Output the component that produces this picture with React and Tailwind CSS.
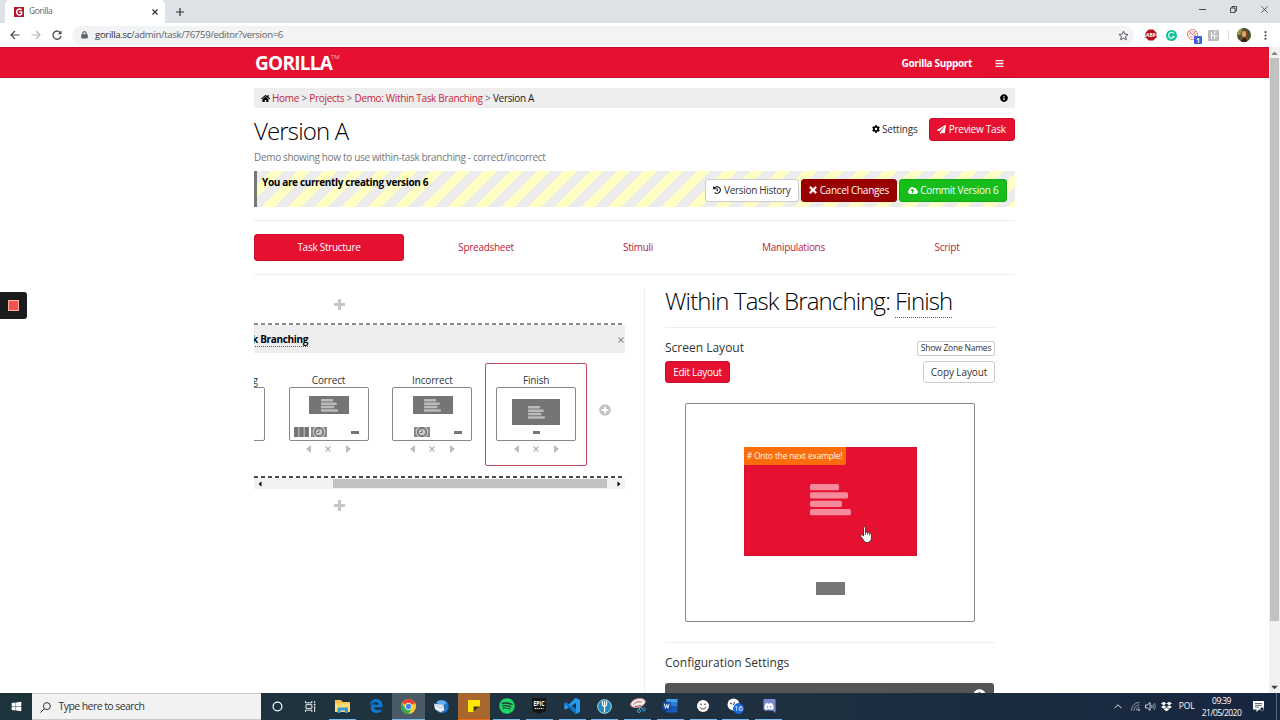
import React from "react";
import {
  FaHome, FaInfoCircle, FaCog, FaPaperPlane, FaHistory, FaTimes, FaCloudUploadAlt,
  FaBars, FaLock, FaSpotify, FaDiscord, FaDropbox, FaWindows,
  FaCaretLeft, FaCaretRight, FaCaretUp, FaCaretDown,
} from "react-icons/fa";

const BARS = [29, 38, 32, 41];

function TextLines({ className, fill }) {
  return (
    <svg viewBox="0 0 41 33" className={className} fill={fill} preserveAspectRatio="none">
      {BARS.map((w, i) => (
        <rect key={i} x="0" y={i * 8.6} width={w} height="6.4" rx="1.6" />
      ))}
    </svg>
  );
}

function Plus({ className }) {
  return (
    <svg viewBox="0 0 11 11" className={className + " h-[11px] w-[11px]"} fill="#c6c6c6">
      <rect x="4" y="0" width="3" height="11" rx=".6" />
      <rect x="0" y="4" width="11" height="3" rx=".6" />
    </svg>
  );
}

function Cross({ color = "#b4b4b4" }) {
  return (
    <svg viewBox="0 0 6 6" className="h-[6px] w-[6px]" stroke={color} strokeWidth="1.200"><path d="M.5.5l5 5M5.500.5l-5 5" /></svg>
  );
}

function BrowserChrome() {
  return (
    <header className="shrink-0">
      <div className="flex h-[23px] items-stretch bg-[#dee1e6]">
        <div className="ml-[5px] flex w-[160px] items-center rounded-t-[5px] bg-white pl-[9px] pr-[7.500px]">
          <svg viewBox="0 0 10 10" className="h-[10px] w-[10px]">
            <rect width="10" height="10" fill="#b5152b" />
            <path d="M7.600 2.900C6 1.400 2.600 2 2.600 5s3.300 3.800 5 2.300V5.100H5.200" fill="none" stroke="#fff" strokeWidth="1.500" />
          </svg>
          <span className="ml-[5px] flex-1 text-[8.500px] tracking-[-.35px] text-[#5f6368]">Gorilla</span>
          <svg viewBox="0 0 6 6" className="h-[6px] w-[6px]" stroke="#333" strokeWidth="1.200"><path d="M.5.5l5 5M5.500.5l-5 5" /></svg>
        </div>
        <svg viewBox="0 0 8 8" className="ml-[11px] mt-[7.500px] h-[8px] w-[8px]" stroke="#333" strokeWidth="1.200"><path d="M4 0v8M0 4h8" /></svg>
        <div className="ml-auto flex items-center gap-[24px] pr-[12px] pb-[4px]">
          <svg viewBox="0 0 7 7" className="h-[7px] w-[7px]" stroke="#222" strokeWidth=".8"><path d="M0 3.500h7" /></svg>
          <svg viewBox="0 0 7 7" className="h-[7px] w-[7px]" stroke="#222" strokeWidth=".8" fill="none"><path d="M.5 2h4.500v4.500H.5zM2 2V.5h4.500V5H5" /></svg>
          <svg viewBox="0 0 7 7" className="h-[7px] w-[7px]" stroke="#222" strokeWidth=".7"><path d="M.3.3l6.400 6.400M6.700.3L.3 6.700" /></svg>
        </div>
      </div>
      <div className="flex h-[24px] items-center bg-white pl-[10px] pr-[13px]">
        <svg viewBox="0 0 10 10" className="h-[10px] w-[10px]" fill="none" stroke="#4a4d51" strokeWidth="1.200"><path d="M9.500 5H1M5 1L1 5l4 4" /></svg>
        <svg viewBox="0 0 10 10" className="ml-[11px] h-[10px] w-[10px]" fill="none" stroke="#b4b6b9" strokeWidth="1.200"><path d="M.5 5H9M5 1l4 4-4 4" /></svg>
        <svg viewBox="0 0 10 10" className="ml-[11px] h-[10px] w-[10px]" fill="none" stroke="#4a4d51" strokeWidth="1.300"><path d="M8.600 3A4.100 4.100 0 1 0 9.100 6" /><path d="M9.500.5v3.700H5.800z" fill="#4a4d51" stroke="none" /></svg>
        <div className="ml-[10px] flex h-[19px] w-[1062px] items-center rounded-full bg-[#f1f3f4] pl-[8.500px] pr-[5px]">
          <FaLock className="h-[7.500px] w-[7px] text-[#5f6368]" />
          <span className="ml-[7.500px] flex-1 text-[9.600px] tracking-[-.32px] text-[#5f6368]"><span className="text-[#2f3236]">gorilla.sc</span>/admin/task/76759/editor?version=6</span>
          <svg viewBox="0 0 24 24" className="h-[11px] w-[11px]" fill="none" stroke="#4a4d51" strokeWidth="2"><path d="M12 2.500l2.900 6.500 7 .7-5.300 4.700 1.600 6.900-6.200-3.700-6.200 3.700 1.600-6.900-5.300-4.700 7-.7z" /></svg>
        </div>
        <div className="ml-auto flex items-center">
          <svg viewBox="0 0 12 12" className="h-[12px] w-[12px]"><path d="M3.700.5h4.600l3.200 3.200v4.600l-3.200 3.200H3.700L.5 8.300V3.700z" fill="#b3121d" /><text x="6" y="8" fontSize="5" fontWeight="700" textAnchor="middle" fill="#fff">ABP</text></svg>
          <svg viewBox="0 0 12 12" className="ml-[9px] h-[11px] w-[11px]"><circle cx="6" cy="6" r="6" fill="#15c39a" /><path d="M8.700 4A3.200 3.200 0 1 0 9 7H7" fill="none" stroke="#fff" strokeWidth="1.100" /></svg>
          <svg viewBox="0 0 16 16" className="ml-[10px] mt-[4px] h-[16px] w-[16px]"><g fill="none" stroke="#e8646c" strokeWidth=".9"><circle cx="5.500" cy="5.500" r="5" /><circle cx="5.500" cy="5.500" r="2.800" strokeDasharray="3 1" /><path d="M2 2l7 7M9 2L5 6" /></g><rect x="7" y="7" width="8" height="8" rx="1" fill="#4160d5" /><text x="11" y="13.500" fontSize="6.500" fontWeight="700" textAnchor="middle" fill="#fff">1</text></svg>
          <svg viewBox="0 0 11 11" className="ml-[5px] h-[11px] w-[11px]"><rect width="11" height="11" rx="1" fill="#bdbdbd" /><path d="M3.500 2v7M3.500 5.500h3V9M6.500 4V2h2M8 5v2" fill="none" stroke="#fff" strokeWidth="1" /></svg>
          <div className="ml-[9px] h-[10px] w-px bg-[#dcdcdc]" />
          <svg viewBox="0 0 14 14" className="ml-[8px] h-[14px] w-[14px]"><defs><clipPath id="av"><circle cx="7" cy="7" r="7" /></clipPath></defs><g clipPath="url(#av)"><rect width="14" height="14" fill="#4c5028" /><path d="M0 0h5v7H0z" fill="#9a9a48" /><path d="M4 14C3 5 4 2 7 2s4.500 3 3.500 12z" fill="#7e4a20" /><ellipse cx="7" cy="6" rx="2" ry="3" fill="#dba878" /><path d="M4 14l2-4h3l1 4z" fill="#2b221c" /></g></svg>
          <svg viewBox="0 0 3 10" className="ml-[13px] h-[9px] w-[3px]" fill="#4a4d51"><circle cx="1.500" cy="1.300" r="1.200" /><circle cx="1.500" cy="5" r="1.200" /><circle cx="1.500" cy="8.700" r="1.200" /></svg>
        </div>
      </div>
    </header>
  );
}

function SiteBar() {
  return (
    <div className="h-[31px] shrink-0 border-y border-[#c3102a] bg-[#e61030]">
      <div className="ml-[255px] flex h-full w-[759px] items-center pt-px text-white">
        <span className="text-[19px] font-bold leading-none tracking-[-.750px]">GORILLA</span>
        <span className="-ml-px mb-[13px] text-[6px] leading-none text-[#ffb4bf]">TM</span>
        <span className="ml-auto text-[10px] font-bold tracking-[-.34px]">Gorilla Support</span>
        <div className="ml-[13px] flex h-[21px] w-[29px] items-center justify-center border border-[#dd0f2e]"><FaBars className="h-[9px] w-[9px]" /></div>
      </div>
    </div>
  );
}

function Breadcrumb() {
  const items = ["Home", "Projects", "Demo: Within Task Branching"];
  return (
    <nav className="flex h-[20px] items-center rounded-[2px] bg-[#eee] pl-[7px] pr-[7px] text-[10px] tracking-[-.330px]">
      <FaHome className="mr-[2px] h-[9px] w-[9px] text-black" />
      {items.map((t) => (
        <React.Fragment key={t}>
          <span className="text-[#c6253d]">{t}</span>
          <span className="mx-[2.500px] text-[#666]">&gt;</span>
        </React.Fragment>
      ))}
      <span className="text-[#222]">Version A</span>
      <FaInfoCircle className="ml-auto h-[8px] w-[8px] text-black" />
    </nav>
  );
}

function Banner() {
  const btn = "flex h-[23px] items-center justify-center gap-[2.500px] rounded-[3px] border text-[10px] tracking-[-.3px] whitespace-nowrap";
  return (
    <div className="flex h-[36px] justify-between border-l-[3px] border-[#777] bg-[repeating-linear-gradient(135deg,#ececec_0_9.430px,#ffffc4_9.430px_18.860px)] pl-[5px] pr-[8px]">
      <span className="mt-[4px] text-[10px] font-bold tracking-[-.350px] text-black">You are currently creating version 6</span>
      <div className="mt-[7.500px] flex gap-[2px]">
        <div className={btn + " w-[94px] border-[#ccc] bg-white text-[#333]"}><FaHistory className="h-[8px] w-[8px] text-black" />Version History</div>
        <div className={btn + " w-[96px] border-[#800] bg-[#990000] text-white"}><FaTimes className="h-[10px] w-[8px]" stroke="currentColor" strokeWidth="30" />Cancel Changes</div>
        <div className={btn + " w-[108px] border-[#15a815] bg-[#16bd1b] text-white"}><FaCloudUploadAlt className="h-[9px] w-[10px]" />Commit Version 6</div>
      </div>
    </div>
  );
}

function MiniBox({ kind }) {
  if (kind === "finish") {
    return (
      <div className="flex h-[54px] w-[80px] flex-col items-center rounded-[2px] border border-[#888] bg-white pt-[11px]">
        <div className="flex h-[26px] w-[48px] items-center justify-center bg-[#757575]"><TextLines className="h-[13px] w-[17px]" fill="#bbb" /></div>
        <div className="mt-[6px] h-[3px] w-[7px] bg-[#757575]" />
      </div>
    );
  }
  return (
    <div className="flex h-[54px] w-[80px] flex-col rounded-[2px] border border-[#888] bg-white pt-[8px]">
      <div className="ml-[19.500px] flex h-[18px] w-[40px] items-center justify-center bg-[#757575]"><TextLines className="h-[13px] w-[17px]" fill="#bbb" /></div>
      <div className="mt-[13px] flex items-center pl-[4px]">
        <svg viewBox="0 0 15 10" className="h-[10px] w-[15px]" fill="#757575">
          {kind === "correct" && [0, 5.2, 10.4].map((x) => <rect key={x} x={x} width="4.600" height="10" />)}
        </svg>
        <svg viewBox="0 0 16 10" className="ml-[2px] h-[10px] w-[16px]">
          <rect width="16" height="10" fill="#888" /><circle cx="8" cy="5" r="6.200" fill="#ccc" /><circle cx="8" cy="5" r="4.200" fill="#ccc" stroke="#707070" strokeWidth="1.700" /><path d="M8 2.500V5.500H6" fill="none" stroke="#707070" />
        </svg>
        <div className="ml-[24px] h-[3px] w-[8px] bg-[#757575]" />
      </div>
    </div>
  );
}

function ScreenCard({ label, kind, selected }) {
  return (
    <div className={"flex h-[103px] w-[102px] shrink-0 flex-col items-center rounded-[2px] border pt-[9px] " + (selected ? "border-[#c04a60]" : "border-transparent")}>
      <span className="h-[14px] text-[10px] leading-[15px] tracking-[-.15px] text-[#333]">{label}</span>
      <MiniBox kind={kind} />
      <div className="mt-[4px] flex items-center gap-[14px]">
        <svg viewBox="0 0 5 8" className="h-[8px] w-[5px]" fill="#bdbdbd"><path d="M5 0v8L0 4z" /></svg>
        <Cross />
        <svg viewBox="0 0 5 8" className="ml-px h-[8px] w-[5px]" fill="#bdbdbd"><path d="M0 0v8l5-4z" /></svg>
      </div>
    </div>
  );
}

function Structure() {
  return (
    <section className="flex w-[391px] shrink-0 flex-col border-r border-[#eee] pt-[11px]">
      <Plus className="ml-[80px]" />
      <div className="mt-[13px] w-[371px] overflow-hidden">
        <svg viewBox="0 0 371 2" className="block h-[2px] w-[371px]"><path d="M0 1h371" stroke="#666" strokeWidth="1.500" strokeDasharray="4 3" /></svg>
        <div className="flex h-[28px] items-center justify-between bg-[#eee] pr-[1.500px] pt-px">
          <span className="-ml-[2px] border-b border-dotted border-[#c6253d] text-[10px] font-bold leading-[13px] tracking-[-.330px] text-black">k Branching</span>
          <Cross color="#999" />
        </div>
        <div className="mt-[10px] flex">
          <div className="flex w-[11px] shrink-0 flex-col items-end overflow-hidden pt-[10px]">
            <span className="h-[14px] pr-[7px] text-[10px] leading-[15px] text-[#333]">g</span>
            <div className="h-[54px] w-[14px] shrink-0 rounded-r-[2px] border border-[#888]" />
          </div>
          <div className="ml-[12.500px] flex gap-[1.800px]">
            <ScreenCard label="Correct" kind="correct" />
            <ScreenCard label="Incorrect" kind="incorrect" />
            <ScreenCard label="Finish" kind="finish" selected />
          </div>
          <svg viewBox="0 0 12 12" className="ml-[12px] mt-[41px] h-[12px] w-[12px] shrink-0"><circle cx="6" cy="6" r="5.800" fill="#c2c2c2" /><path d="M6 2.700v6.600M2.700 6h6.600" stroke="#fff" strokeWidth="1.900" /></svg>
        </div>
        <svg viewBox="0 0 371 2" className="mt-[10px] block h-[2px] w-[371px]"><path d="M0 1h369" stroke="#111" strokeWidth="1.500" strokeDasharray="4 3" /></svg>
        <div className="flex h-[11px] items-center bg-[#f1f1f1] pl-[4px] pr-[4px]">
          <FaCaretLeft className="h-[8px] w-[4px] text-black" />
          <div className="ml-[71px] h-[9px] w-[274px] bg-[#c1c1c1]" />
          <FaCaretRight className="ml-auto h-[8px] w-[4px] text-black" />
        </div>
      </div>
      <Plus className="ml-[80px] mt-[11px]" />
    </section>
  );
}

function Details() {
  return (
    <section className="ml-[20px] w-[330px]">
      <h1 className="flex h-[40px] items-start gap-[5px] border-b border-[#eee] text-[24px] font-light leading-[26px] tracking-[-.850px] text-black">
        <span>Within Task Branching:</span>
        <span className="h-[30px] border-b border-dotted border-[#c6253d]">Finish</span>
      </h1>
      <div className="mt-[13px] flex h-[15px] items-center justify-between">
        <span className="-mt-[2px] text-[12px] text-[#333]">Screen Layout</span>
        <span className="flex h-[15px] w-[78px] items-center justify-center rounded-[2px] border border-[#ccc] text-[8.500px] tracking-[-.220px] text-[#333]">Show Zone Names</span>
      </div>
      <div className="mt-[5px] flex h-[22px] justify-between text-[10px] tracking-[-.3px]">
        <span className="flex w-[65px] items-center justify-center rounded-[3px] border border-[#c80f2b] bg-[#e61030] text-white">Edit Layout</span>
        <span className="flex w-[72px] items-center justify-center rounded-[3px] border border-[#ccc] tracking-[-.1px] text-[#333]">Copy Layout</span>
      </div>
      <div className="ml-[20px] mt-[20px] flex h-[219px] w-[290px] flex-col items-center rounded-[2px] border border-[#888] pt-[43px]">
        <div className="flex h-[109px] w-[173px] flex-col border border-[#cf1430] bg-[#e61030]">
          <span className="-ml-px -mt-px flex h-[18px] w-[102px] items-center justify-center rounded-br-[2px] bg-[#fb6c0c] text-[8.500px] tracking-[-.220px] text-[#fff3e8]"># Onto the next example!</span>
          <TextLines className="ml-[65px] mt-[19px] h-[32px] w-[41px]" fill="#f58a9c" />
        </div>
        <div className="mt-[26px] h-[13px] w-[29px] bg-[#777]" />
      </div>
      <div className="mt-[20px] border-t border-[#eee] pt-[11px] text-[12px] leading-[18px] text-[#333]">Configuration Settings</div>
      <div className="mt-[11px] flex h-[40px] w-[329px] items-start justify-between rounded-t-[3px] bg-[#555] px-[12px] pt-[7px]">
        <span className="ml-[2px] text-[9.330px] leading-[14px] text-[#ddd]">Title</span>
        <FaInfoCircle className="-mt-px mr-[-4px] h-[13px] w-[13px] text-white" />
      </div>
    </section>
  );
}

function TaskCell({ children, className = "", line = "" }) {
  return (
    <div className={"flex h-full w-[32.750px] shrink-0 flex-col items-center " + className}>
      <div className="flex flex-1 items-center justify-center pt-px">{children}</div>
      <div className={"h-[1.500px] " + (line || "w-0")} />
    </div>
  );
}

const LINE = "w-[27px] bg-[#76b9ed]";

function Taskbar() {
  return (
    <footer className="flex h-[27px] shrink-0 items-stretch bg-linear-to-r from-[#1d333b] via-[#203240] to-[#17263f] text-white">
      <div className="flex w-[32px] items-center justify-center"><FaWindows className="h-[11px] w-[11px]" /></div>
      <div className="flex w-[229px] items-center border-y border-[#c9c9c9] bg-[#f2f2f2] pl-[8px] pt-px">
        <svg viewBox="0 0 12 12" className="h-[11px] w-[11px]" fill="none" stroke="#222" strokeWidth="1"><circle cx="7.500" cy="4.500" r="3.800" /><path d="M4.700 7.300L.5 11.500" /></svg>
        <span className="ml-[7.500px] text-[10.500px] tracking-[-.570px] text-[#333]">Type here to search</span>
      </div>
      <TaskCell><svg viewBox="0 0 12 12" className="h-[11px] w-[11px]"><circle cx="6" cy="6" r="4.800" fill="none" stroke="#fff" strokeWidth="1.300" /></svg></TaskCell>
      <TaskCell><svg viewBox="0 0 12 12" className="h-[11px] w-[11px]" fill="none" stroke="#fff"><path d="M.5 0v2h7V0M1 4h6.500v4H1zM.5 12v-2h7v2M10.500 0v2.500M10.500 5v7M9.500 3.800h2" strokeWidth="1" /></svg></TaskCell>
      <TaskCell line={LINE}><svg viewBox="0 0 16 13" className="h-[13px] w-[16px]"><path d="M0 0h6l1.500 2H15v10H0z" fill="#f7c34b" /><path d="M0 3.500h15V12H0z" fill="#ffdb75" /><path d="M2.500 13V7.500h10.500V13h-3v-2.500h-4.500V13z" fill="#3c9ad6" /></svg></TaskCell>
      <TaskCell><svg viewBox="0 0 24 24" className="h-[14px] w-[14px]"><path d="M1 11C2 4 7 0 12.500 0 19 0 23 5 23 11v3H8c.5 5 8 7 13 3.500V22c-7 4-18 2-18-7.500C3 10 6 7 9.500 5.800 8.500 7 8 8.500 8 10h8.500c0-6-8.500-7-15.500 1z" fill="#0a78d6" /></svg></TaskCell>
      <TaskCell className="bg-[#4b5b65]" line="w-full bg-[#76b9ed]"><svg viewBox="0 0 24 24" className="h-[15px] w-[15px]"><circle cx="12" cy="12" r="12" fill="#fcc934" /><path d="M12 12L1.600 6A12 12 0 0 1 22.400 6z" fill="#ea4335" /><path d="M1.600 6A12 12 0 0 0 12 24l5-9-5 3-5-3z" fill="#34a853" /><path d="M22.400 6H12v6z" fill="#ea4335" /><circle cx="12" cy="12" r="5.500" fill="#fff" /><circle cx="12" cy="12" r="4.400" fill="#4285f4" /></svg></TaskCell>
      <TaskCell><svg viewBox="0 0 16 16" className="h-[15px] w-[16px]"><circle cx="9" cy="8" r="7.300" fill="#2473c4" /><path d="M3 4c3-4 8-3 11 0l-4 3z" fill="#63b0ec" /><path d="M.5 5l10 1 1 6-4 2-6-3z" fill="#e9edf4" /><path d="M.5 5L8 9.500l2.500-3.500" fill="none" stroke="#a8b5c8" strokeWidth=".7" /></svg></TaskCell>
      <TaskCell className="bg-[#a9672f]" line="w-full bg-[#f36a16]"><svg viewBox="0 0 12 12" className="h-[12px] w-[12px]"><path d="M0 0h12v12H0z" fill="#ffe600" /><path d="M5.500 12V6.500H12z" fill="#3a3620" /><path d="M12 6.500V12H5.500z" fill="#a9672f" /></svg></TaskCell>
      <TaskCell line={LINE}><FaSpotify className="h-[16px] w-[16px] text-[#1ed760]" /></TaskCell>
      <TaskCell line={LINE}><svg viewBox="0 0 14 16" className="h-[16px] w-[14px]"><path d="M0 0h14v13l-7 3-7-3z" fill="#161616" /><text x="7" y="8" fontSize="7.500" fontWeight="700" textAnchor="middle" textLength="11" lengthAdjust="spacingAndGlyphs" fill="#fff">EPIC</text><path d="M2.500 10.500h9" stroke="#ddd" strokeWidth="1.200" strokeDasharray="1.500 .6" /></svg></TaskCell>
      <TaskCell line={LINE}><svg viewBox="0 0 24 24" className="h-[16px] w-[16px]"><path d="M17.500 0L24 3v18l-6.500 3L7 14.200 2.700 17.500.5 16.200v-8.400L2.700 6.500 7 9.800zM18 7l-6.500 5 6.500 5z" fill="#259bec" fillRule="evenodd" /><path d="M.5 7.800l2.200-1.300L18 18v6z" fill="#0b73c4" /></svg></TaskCell>
      <TaskCell line={LINE}><svg viewBox="0 0 16 16" className="h-[15px] w-[15px]"><circle cx="8" cy="8" r="7.300" fill="#2489b5" stroke="#bfe7f5" strokeWidth="1" /><path d="M5.800 2.500v3q0 2 2.200 2t2.200-2v-3M8 2.500V14" fill="none" stroke="#fff" strokeWidth="1.300" /></svg></TaskCell>
      <TaskCell line={LINE}><svg viewBox="0 0 16 16" className="h-[16px] w-[16px]"><ellipse cx="8" cy="5" rx="7.500" ry="4.300" fill="#efe9e9" stroke="#d9868a" strokeWidth=".8" transform="rotate(-15 8 5)" /><path d="M3.500 6.500c3-3.500 5-2.500 8-2.500M5 8.500l6-1" fill="none" stroke="#b9474d" /><path d="M8 7.500l5 3.500M11 7.500l-2 4" stroke="#9aa6ad" /><circle cx="9" cy="13" r="1.500" fill="none" stroke="#3da2d9" /><circle cx="13.800" cy="11.500" r="1.500" fill="none" stroke="#3da2d9" /></svg></TaskCell>
      <TaskCell line={LINE}><svg viewBox="0 0 16 15" className="h-[14px] w-[16px]"><rect x="4" width="12" height="4" fill="#41a5ee" /><rect x="4" y="4" width="12" height="4" fill="#2b7cd3" /><rect x="4" y="8" width="12" height="6.500" fill="#185abd" /><rect y="3" width="9" height="9" rx=".8" fill="#1349a1" /><path d="M2 5l1.200 5L4.500 6l1.300 4L7 5" fill="none" stroke="#fff" strokeWidth="1" /></svg></TaskCell>
      <TaskCell line={LINE}><svg viewBox="0 0 12 12" className="h-[12px] w-[12px]"><circle cx="6" cy="6" r="6" fill="#fff" /><circle cx="4" cy="4.300" r=".8" fill="#333" /><circle cx="8" cy="4.300" r=".8" fill="#333" /><path d="M2.800 6.800a3.400 3.400 0 0 0 6.400 0" fill="none" stroke="#333" strokeWidth=".8" /></svg></TaskCell>
      <TaskCell line={LINE}><svg viewBox="0 0 17 16" className="h-[16px] w-[17px]"><circle cx="6.500" cy="6.500" r="6" fill="#fff" /><path d="M3 5l2 1M8 4l-2 3" stroke="#333" /><circle cx="11.500" cy="10.500" r="5.400" fill="#1769d8" /><text x="11.500" y="13.200" fontSize="8" textAnchor="middle" textLength="8.500" lengthAdjust="spacingAndGlyphs" fill="#fff">16</text></svg></TaskCell>
      <TaskCell line={LINE}><svg viewBox="0 0 13 15" className="h-[14px] w-[13px]"><path d="M1.500 0h10A1.500 1.500 0 0 1 13 1.500V15l-3-2.500H1.500A1.500 1.500 0 0 1 0 11V1.500A1.500 1.500 0 0 1 1.500 0z" fill="#7a8bd4" /></svg><FaDiscord className="-ml-[11.500px] h-[9px] w-[10px]" /></TaskCell>
      <div className="ml-auto flex items-center">
        <svg viewBox="0 0 9 5" className="h-[5px] w-[8px]" fill="none" stroke="#fff" strokeWidth="1"><path d="M.5 4.500l4-4 4 4" /></svg>
        <svg viewBox="0 0 10 10" className="ml-[8.500px] h-[9px] w-[9px]" fill="none" stroke="#aab2bd" strokeWidth=".9"><path d="M.5 9.500a9 9 0 0 1 9-9M3.300 9.500a6.200 6.200 0 0 1 6.200-6.200M6 9.500A3.500 3.500 0 0 1 9.500 6" /><circle cx="8.800" cy="8.800" r=".8" fill="#fff" /></svg>
        <svg viewBox="0 0 12 10" className="ml-[5px] h-[9px] w-[11px]" fill="none" stroke="#fff" strokeWidth=".9"><path d="M.5 3.300h2L5.500.6v8.800l-3-2.700h-2zM7.200 3.500q1.200 1.500 0 3" /><path d="M8.800 2.200q2 2.800 0 5.600M10.300 1q2.500 4 0 8" stroke="#8f99a8" /></svg>
        <FaDropbox className="ml-[5.500px] h-[11px] w-[11px]" />
        <span className="ml-[6.500px] text-[8.500px] tracking-[-.1px]">POL</span>
        <div className="ml-[7.500px] flex w-[39px] flex-col items-center whitespace-nowrap text-[8.500px] leading-[12px] tracking-[-.580px]"><span>09:39</span><span>21/05/2020</span></div>
        <svg viewBox="0 0 12 12" className="ml-[12px] h-[12px] w-[12px]"><path d="M0 0h11v8.500H6L3.500 11V8.500H0z" fill="#fff" /><path d="M2 2.500h7M2 4.300h7M2 6.100h4" stroke="#17263f" strokeWidth=".7" /><circle cx="9" cy="8" r="1.800" fill="#17263f" stroke="#aaa" strokeWidth=".6" /></svg>
        <div className="ml-[11px] h-[27px] w-[4px] border-l border-[#59657a]" />
      </div>
    </footer>
  );
}

export default function App() {
  return (
    <div className="relative flex h-[720px] w-[1280px] flex-col overflow-hidden bg-white font-['Open_Sans',sans-serif]">
      <BrowserChrome />
      <div className="flex min-h-0 flex-1">
        <div className="flex w-[1269px] flex-col overflow-hidden">
          <SiteBar />
          <main className="ml-[254px] w-[761px] pt-[10px]">
            <Breadcrumb />
            <div className="mt-[10px] flex h-[22px] items-center pr-[.5px]">
              <h1 className="mt-[3px] text-[24px] font-light leading-[27px] tracking-[-.850px] text-black">Version A</h1>
              <div className="ml-auto flex items-center gap-[2px] text-[10px] tracking-[-.2px] text-[#333]"><FaCog className="h-[8px] w-[8px] text-black" />Settings</div>
              <div className="ml-[11px] flex h-[23px] w-[86px] items-center justify-center gap-[2.500px] rounded-[3px] border border-[#c80f2b] bg-[#e61030] text-[10px] tracking-[-.280px] text-white"><FaPaperPlane className="h-[9px] w-[9px]" />Preview Task</div>
            </div>
            <p className="mt-[10px] h-[21px] text-[10px] leading-[14px] tracking-[-.330px] text-[#777]">Demo showing how to use within-task branching - correct/incorrect</p>
            <Banner />
            <div className="mt-[13px] flex h-[55px] items-center border-y border-[#eee] text-[10px] tracking-[-.280px] text-[#b5253b]">
              <div className="flex h-[27px] w-[150px] items-center justify-center rounded-[3px] border border-[#c80f2b] bg-[#e61030] text-white">Task Structure</div>
              <span className="w-[164px] text-center">Spreadsheet</span>
              <span className="w-[140px] text-center">Stimuli</span>
              <span className="w-[171px] text-center">Manipulations</span>
              <span className="w-[136px] text-center">Script</span>
            </div>
            <div className="mt-[13px] flex h-[405px]">
              <Structure />
              <Details />
            </div>
          </main>
        </div>
        <div className="flex w-[11px] flex-col items-center bg-[#f1f1f1]">
          <FaCaretUp className="mt-[1px] h-[10px] w-[7px] text-[#888]" />
          <div className="mb-[61px] w-[9px] flex-1 bg-[#c1c1c1]" />
          <FaCaretDown className="mb-[1px] h-[10px] w-[7px] text-[#444]" />
        </div>
      </div>
      <Taskbar />
      <div className="absolute left-0 top-[292px] flex h-[27px] w-[27px] items-center justify-center rounded-r-[3px] bg-[#1b1b1b]"><div className="h-[11px] w-[11px] border border-[#ffb0a8] bg-[#f2544f]" /></div>
      <svg viewBox="0 0 12 17" className="absolute left-[860px] top-[526px] h-[17px] w-[12px]"><path d="M3.500 10V1.800c0-1.400 2-1.400 2 0v4.400l1-.2c.7 0 1 .4 1.100.7 1-.4 1.700 0 1.900.7 1.100-.2 1.900.2 1.900 1.300v3c0 3-1.500 4.800-4.200 4.800-2.200 0-3-1.100-3.800-2.600L.7 10.300c-.7-1.300.7-2 1.600-1.200z" fill="#fff" stroke="#222" strokeWidth=".8" /><path d="M5.500 6v3M7.500 6.700V9M9.500 7.500V9.500" stroke="#222" strokeWidth=".6" /></svg>
    </div>
  );
}
